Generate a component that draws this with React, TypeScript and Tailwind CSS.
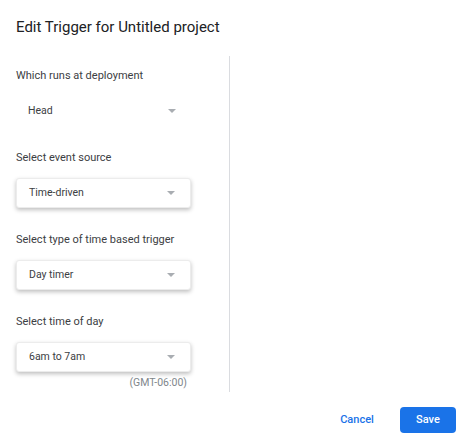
import React from 'react';

const FONT = "font-['Roboto','Liberation_Sans',sans-serif]";

function Caret() {
  return (
    <svg width="8" height="4" viewBox="0 0 8 4" className="shrink-0">
      <path d="M0 0 L8 0 L4 4 Z" fill="#a9adb2" />
    </svg>
  );
}

function Select({ value, flat = false }: { value: string; flat?: boolean }) {
  return (
    <div
      className={`flex h-[30px] w-[175px] items-center justify-between rounded-[3px] bg-white pl-3 pr-[15px] ${
        flat ? '' : 'border border-[#ececec] shadow-[0_2px_4px_rgba(0,0,0,0.25)]'
      }`}
    >
      <span className="text-[10.5px] text-[#3c4043]">{value}</span>
      <Caret />
    </div>
  );
}

function Field({ label, value, flat }: { label: string; value: string; flat?: boolean }) {
  return (
    <div className="flex flex-col gap-3">
      <div className="text-[11px] leading-4 text-[#3c4043]">{label}</div>
      <Select value={value} flat={flat} />
    </div>
  );
}

export default function App() {
  return (
    <div className={`flex h-[444px] w-[474px] flex-col bg-white ${FONT}`}>
      <h1 className="px-4 pt-[15px] text-[15px] leading-6 text-[#202124]">Edit Trigger for Untitled project</h1>

      <div className="mt-[17px] flex">
        <div className="flex h-[336px] w-[230px] flex-col gap-6 border-r border-[#dadce0] px-4 pt-3">
          <Field label="Which runs at deployment" value="Head" flat />
          <Field label="Select event source" value="Time-driven" />
          <Field label="Select type of time based trigger" value="Day timer" />
          <div className="flex flex-col">
            <Field label="Select time of day" value="6am to 7am" />
            <div className="mt-[3px] w-[171px] text-right text-[10.5px] leading-4 text-[#80868b]">(GMT-06:00)</div>
          </div>
        </div>
      </div>

      <div className="mt-[15px] flex justify-end gap-[15px] pr-[18px]">
        <button className="h-[26px] w-[56px] rounded-[4px] text-[11px] font-medium text-[#1a73e8]">Cancel</button>
        <button className="h-[26px] w-[56px] rounded-[4px] bg-[#1a73e8] text-[11px] font-medium text-white">Save</button>
      </div>
    </div>
  );
}
